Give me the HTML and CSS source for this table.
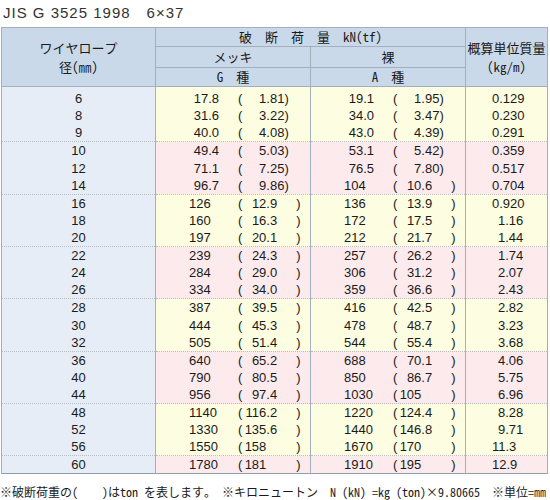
FILE: index.html
```html
<!DOCTYPE html>
<html lang="ja">
<head>
  <meta charset="UTF-8" />
  <meta name="viewport" content="width=device-width, initial-scale=1" />
  <title>JIS G 3525 6×37</title>
  <link rel="stylesheet" href="styles.css">
</head>
<body>

  <div class="title">JIS G 3525 1998<span class="spec">6×37</span></div>

  <table class="rope">
    <colgroup>
      <col class="c-dia">
      <col class="c-load">
      <col class="c-load">
      <col class="c-mass">
    </colgroup>
    <thead>
      <tr class="h1">
        <th rowspan="3" class="two">ワイヤロープ<br>径(㎜)</th>
        <th colspan="2">破　断　荷　量　<span class="unit">kN(tf)</span></th>
        <th rowspan="3" class="two">概算単位質量<br><span class="unit">(kg/m)</span></th>
      </tr>
      <tr class="h2">
        <th>メッキ</th>
        <th>裸</th>
      </tr>
      <tr class="h3">
        <th>G　種</th>
        <th>A　種</th>
      </tr>
    </thead>
    <tbody>
      <tr class="y first">
        <td class="d">6</td>
        <td class="ld"><span class="v">17.8</span><span class="o">(</span><span class="n">1</span>.81)</td>
        <td class="ld"><span class="v">19.1</span><span class="o">(</span><span class="n">1</span>.95)</td>
        <td class="m">0.129</td>
      </tr>
      <tr class="y">
        <td class="d">8</td>
        <td class="ld"><span class="v">31.6</span><span class="o">(</span><span class="n">3</span>.22)</td>
        <td class="ld"><span class="v">34.0</span><span class="o">(</span><span class="n">3</span>.47)</td>
        <td class="m">0.230</td>
      </tr>
      <tr class="y">
        <td class="d">9</td>
        <td class="ld"><span class="v">40.0</span><span class="o">(</span><span class="n">4</span>.08)</td>
        <td class="ld"><span class="v">43.0</span><span class="o">(</span><span class="n">4</span>.39)</td>
        <td class="m">0.291</td>
      </tr>

      <tr class="p g">
        <td class="d">10</td>
        <td class="ld"><span class="v">49.4</span><span class="o">(</span><span class="n">5</span>.03)</td>
        <td class="ld"><span class="v">53.1</span><span class="o">(</span><span class="n">5</span>.42)</td>
        <td class="m">0.359</td>
      </tr>
      <tr class="p">
        <td class="d">12</td>
        <td class="ld"><span class="v">71.1</span><span class="o">(</span><span class="n">7</span>.25)</td>
        <td class="ld"><span class="v">76.5</span><span class="o">(</span><span class="n">7</span>.80)</td>
        <td class="m">0.517</td>
      </tr>
      <tr class="p">
        <td class="d">14</td>
        <td class="ld"><span class="v">96.7</span><span class="o">(</span><span class="n">9</span>.86)</td>
        <td class="ld"><span class="v l">104</span><span class="o">(</span><span class="n">10</span><span class="f">.6</span>)</td>
        <td class="m">0.704</td>
      </tr>

      <tr class="y g">
        <td class="d">16</td>
        <td class="ld"><span class="v l">126</span><span class="o">(</span><span class="n">12</span><span class="f">.9</span>)</td>
        <td class="ld"><span class="v l">136</span><span class="o">(</span><span class="n">13</span><span class="f">.9</span>)</td>
        <td class="m">0.920</td>
      </tr>
      <tr class="y">
        <td class="d">18</td>
        <td class="ld"><span class="v l">160</span><span class="o">(</span><span class="n">16</span><span class="f">.3</span>)</td>
        <td class="ld"><span class="v l">172</span><span class="o">(</span><span class="n">17</span><span class="f">.5</span>)</td>
        <td class="m s">1.16</td>
      </tr>
      <tr class="y">
        <td class="d">20</td>
        <td class="ld"><span class="v l">197</span><span class="o">(</span><span class="n">20</span><span class="f">.1</span>)</td>
        <td class="ld"><span class="v l">212</span><span class="o">(</span><span class="n">21</span><span class="f">.7</span>)</td>
        <td class="m s">1.44</td>
      </tr>

      <tr class="p g">
        <td class="d">22</td>
        <td class="ld"><span class="v l">239</span><span class="o">(</span><span class="n">24</span><span class="f">.3</span>)</td>
        <td class="ld"><span class="v l">257</span><span class="o">(</span><span class="n">26</span><span class="f">.2</span>)</td>
        <td class="m s">1.74</td>
      </tr>
      <tr class="p">
        <td class="d">24</td>
        <td class="ld"><span class="v l">284</span><span class="o">(</span><span class="n">29</span><span class="f">.0</span>)</td>
        <td class="ld"><span class="v l">306</span><span class="o">(</span><span class="n">31</span><span class="f">.2</span>)</td>
        <td class="m s">2.07</td>
      </tr>
      <tr class="p">
        <td class="d">26</td>
        <td class="ld"><span class="v l">334</span><span class="o">(</span><span class="n">34</span><span class="f">.0</span>)</td>
        <td class="ld"><span class="v l">359</span><span class="o">(</span><span class="n">36</span><span class="f">.6</span>)</td>
        <td class="m s">2.43</td>
      </tr>

      <tr class="y g">
        <td class="d">28</td>
        <td class="ld"><span class="v l">387</span><span class="o">(</span><span class="n">39</span><span class="f">.5</span>)</td>
        <td class="ld"><span class="v l">416</span><span class="o">(</span><span class="n">42</span><span class="f">.5</span>)</td>
        <td class="m s">2.82</td>
      </tr>
      <tr class="y">
        <td class="d">30</td>
        <td class="ld"><span class="v l">444</span><span class="o">(</span><span class="n">45</span><span class="f">.3</span>)</td>
        <td class="ld"><span class="v l">478</span><span class="o">(</span><span class="n">48</span><span class="f">.7</span>)</td>
        <td class="m s">3.23</td>
      </tr>
      <tr class="y">
        <td class="d">32</td>
        <td class="ld"><span class="v l">505</span><span class="o">(</span><span class="n">51</span><span class="f">.4</span>)</td>
        <td class="ld"><span class="v l">544</span><span class="o">(</span><span class="n">55</span><span class="f">.4</span>)</td>
        <td class="m s">3.68</td>
      </tr>

      <tr class="p g">
        <td class="d">36</td>
        <td class="ld"><span class="v l">640</span><span class="o">(</span><span class="n">65</span><span class="f">.2</span>)</td>
        <td class="ld"><span class="v l">688</span><span class="o">(</span><span class="n">70</span><span class="f">.1</span>)</td>
        <td class="m s">4.06</td>
      </tr>
      <tr class="p">
        <td class="d">40</td>
        <td class="ld"><span class="v l">790</span><span class="o">(</span><span class="n">80</span><span class="f">.5</span>)</td>
        <td class="ld"><span class="v l">850</span><span class="o">(</span><span class="n">86</span><span class="f">.7</span>)</td>
        <td class="m s">5.75</td>
      </tr>
      <tr class="p">
        <td class="d">44</td>
        <td class="ld"><span class="v l">956</span><span class="o">(</span><span class="n">97</span><span class="f">.4</span>)</td>
        <td class="ld"><span class="v l">1030</span><span class="o">(</span><span class="n">105</span><span class="f"></span>)</td>
        <td class="m s">6.96</td>
      </tr>

      <tr class="y g">
        <td class="d">48</td>
        <td class="ld"><span class="v l">1140</span><span class="o">(</span><span class="n">116</span><span class="f">.2</span>)</td>
        <td class="ld"><span class="v l">1220</span><span class="o">(</span><span class="n">124</span><span class="f">.4</span>)</td>
        <td class="m s">8.28</td>
      </tr>
      <tr class="y">
        <td class="d">52</td>
        <td class="ld"><span class="v l">1330</span><span class="o">(</span><span class="n">135</span><span class="f">.6</span>)</td>
        <td class="ld"><span class="v l">1440</span><span class="o">(</span><span class="n">146</span><span class="f">.8</span>)</td>
        <td class="m s">9.71</td>
      </tr>
      <tr class="y">
        <td class="d">56</td>
        <td class="ld"><span class="v l">1550</span><span class="o">(</span><span class="n">158</span><span class="f"></span>)</td>
        <td class="ld"><span class="v l">1670</span><span class="o">(</span><span class="n">170</span><span class="f"></span>)</td>
        <td class="m">11.3</td>
      </tr>

      <tr class="p g">
        <td class="d">60</td>
        <td class="ld"><span class="v l">1780</span><span class="o">(</span><span class="n">181</span><span class="f"></span>)</td>
        <td class="ld"><span class="v l">1910</span><span class="o">(</span><span class="n">195</span><span class="f"></span>)</td>
        <td class="m">12.9</td>
      </tr>
    </tbody>
  </table>

  <p class="note">※破断荷重の(　　)はton を表します。　※キロニュートン　N (kN) =kg (ton)×9.80665　※単位=㎜</p>

</body>
</html>
```

FILE: styles.css
```css
:root {
  --head: #c9d9e9;
  --dia: #e6edf6;
  --yellow: #fdfde2;
  --pink: #fdeaed;
  --line: #a3afbb;
  --dot: #b9bec4;
  --text: #1a1a1a;
}

* {
  box-sizing: border-box;
  margin: 0;
  padding: 0;
}

body {
  background-color: white;
  color: var(--text);
  font-family: "Liberation Sans", Arial, sans-serif;
}

.title {
  height: 27px;
  padding: 4px 0 0 3px;
  font-size: 15px;
  line-height: 17px;
  letter-spacing: 1px;
  color: #333;
}

.spec {
  margin-left: 16px;
}

.rope {
  margin-left: 1px;
  width: 546px;
  table-layout: fixed;
  border-collapse: collapse;
  border: 1px solid #8f9ca9;
}

.c-dia { width: 154px; }
.c-load { width: 155px; }
.c-mass { width: 82px; }

.rope th {
  background-color: var(--head);
  border: 1px solid var(--line);
  font-family: "Noto Sans Mono CJK JP", "Noto Sans CJK JP", sans-serif;
  font-weight: normal;
  font-size: 13px;
  line-height: 18px;
  text-align: center;
  color: var(--text);
}

.rope th.two {
  line-height: 19px;
}

.h1 th { height: 19px; }
.h2 th { height: 21px; }
.h3 th { height: 19px; }

.rope td {
  height: 17.35px;
  line-height: 17px;
  font-size: 13px;
  border-left: 1px solid var(--line);
  border-right: 1px solid var(--line);
  white-space: nowrap;
}

.rope tr.first td {
  height: 20.35px;
  padding-top: 3px;
}

.rope tr.g td {
  border-top: 1px dotted var(--dot);
}

.rope tr.y td { background-color: var(--yellow); }
.rope tr.p td { background-color: var(--pink); }
.rope tr td.d { background-color: var(--dia); }

.d {
  text-align: center;
}

.rope td.ld {
  padding-left: 33px;
}

.v {
  display: inline-block;
  width: 30px;
  margin-right: 19px;
  text-align: right;
}

.v.l {
  text-align: left;
}

.n {
  display: inline-block;
  width: 22px;
  margin-left: 2px;
  text-align: right;
}

.f {
  display: inline-block;
  width: 30px;
}

.rope td.m {
  padding-left: 26px;
}

.rope td.m.s {
  padding-left: 32px;
}

.note {
  margin-top: 9px;
  font-family: "Noto Sans Mono CJK JP", "Noto Sans CJK JP", sans-serif;
  font-size: 12px;
  line-height: 17px;
  white-space: nowrap;
}
```
